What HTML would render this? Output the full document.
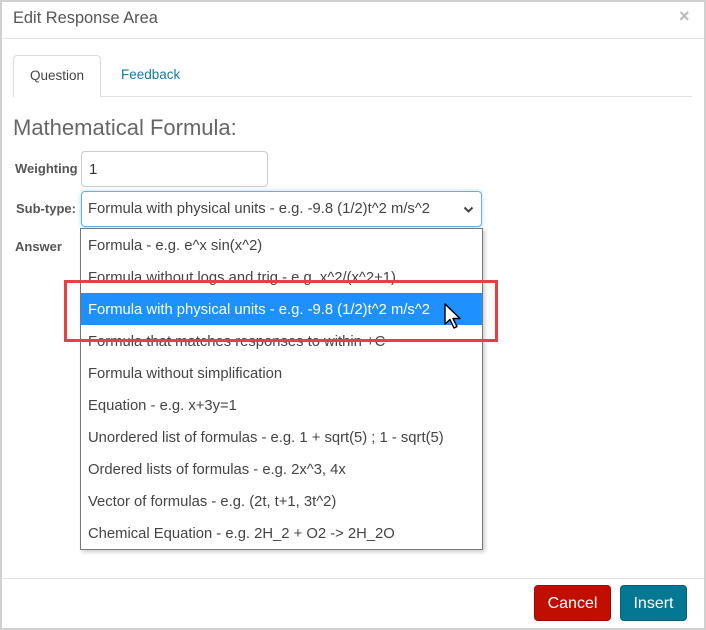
<!DOCTYPE html>
<html><head><style>
*{box-sizing:border-box;margin:0;padding:0}
body{width:706px;height:630px;background:#fff;font-family:"Liberation Sans",Arial,sans-serif;position:relative;overflow:hidden;color:#333}
.frame{position:absolute;left:0;top:0;width:706px;height:630px;border:2px solid #d0d0d0}
.abs{position:absolute}
.title{left:13px;top:9px;font-size:16.4px;color:#555}
.close{left:679px;top:6px;font-size:18px;color:#bbb;font-weight:bold}
.hl{height:1px;background:#e2e2e2}
.tab{left:13px;top:55px;width:88px;height:42px;border:1px solid #ddd;border-bottom:none;border-radius:4px 4px 0 0;background:#fff;font-size:13.5px;color:#444;text-align:center;line-height:40px}
.fb{left:121px;top:67px;font-size:13.5px;color:#1a7a9a}
.h{left:13px;top:115px;font-size:22px;color:#666}
.lbl{font-size:13px;font-weight:bold;color:#555}
.inp{left:81px;top:151px;width:187px;height:36px;border:1px solid #ccc;border-radius:4px;font-size:15px;padding:9px 7px}
.sel{left:81px;top:191px;width:401px;height:36px;border:1px solid #66afe9;border-radius:4px;box-shadow:0 0 4px rgba(102,175,233,.5);font-size:14.8px;padding:9px 6px;color:#444}
.dd{left:80px;top:228px;width:403px;height:322px;border:1px solid #777;background:#fff;box-shadow:2px 2px 4px rgba(0,0,0,.2)}
.it{height:32px;line-height:34px;padding-left:7px;font-size:14.8px;color:#444;white-space:nowrap}
.on{background:#1e90ff;color:#fff}
.red{left:64px;top:280px;width:434px;height:62px;border:3px solid #e84040}
.btn{top:585px;height:36px;border-radius:4px;color:#fff;font-size:16px;text-align:center;line-height:35px}
</style></head><body>
<div class="frame"></div>
<div class="abs title">Edit Response Area</div>
<div class="abs close">×</div>
<div class="abs hl" style="left:2px;top:38px;width:702px"></div>
<div class="abs hl" style="left:13px;top:96px;width:679px"></div>
<div class="abs tab">Question</div>
<div class="abs fb">Feedback</div>
<div class="abs h">Mathematical Formula:</div>
<div class="abs lbl" style="left:15px;top:161px">Weighting</div>
<div class="abs inp">1</div>
<div class="abs lbl" style="left:16px;top:201px">Sub-type:</div>
<div class="abs sel">Formula with physical units - e.g. -9.8 (1/2)t^2 m/s^2
<svg style="position:absolute;right:7px;top:14px" width="11" height="8" viewBox="0 0 11 8"><path d="M1.5 1.5 5.5 5.5 9.5 1.5" stroke="#444" stroke-width="2" fill="none"/></svg></div>
<div class="abs lbl" style="left:15px;top:239px">Answer</div>
<div class="abs dd">
<div class="it">Formula - e.g. e^x sin(x^2)</div>
<div class="it">Formula without logs and trig - e.g. x^2/(x^2+1)</div>
<div class="it on">Formula with physical units - e.g. -9.8 (1/2)t^2 m/s^2</div>
<div class="it">Formula that matches responses to within +C</div>
<div class="it">Formula without simplification</div>
<div class="it">Equation - e.g. x+3y=1</div>
<div class="it">Unordered list of formulas - e.g. 1 + sqrt(5) ; 1 - sqrt(5)</div>
<div class="it">Ordered lists of formulas - e.g. 2x^3, 4x</div>
<div class="it">Vector of formulas - e.g. (2t, t+1, 3t^2)</div>
<div class="it">Chemical Equation - e.g. 2H_2 + O2 -&gt; 2H_2O</div>
</div>
<div class="abs red"></div>
<svg class="abs" style="left:444px;top:303px" width="20" height="28" viewBox="0 0 20 28"><path d="M1 1 L1 21 L6 16.5 L10 25 L13 23.5 L9 15.5 L16 15.5 Z" fill="#fff" stroke="#000" stroke-width="1.4" stroke-linejoin="round"/></svg>
<div class="abs hl" style="left:2px;top:578px;width:702px"></div>
<div class="abs btn" style="left:534px;width:77px;background:#c00f00;border:1px solid #a00">Cancel</div>
<div class="abs btn" style="left:620px;width:67px;background:#047893;border:1px solid #036075">Insert</div>
</body></html>
